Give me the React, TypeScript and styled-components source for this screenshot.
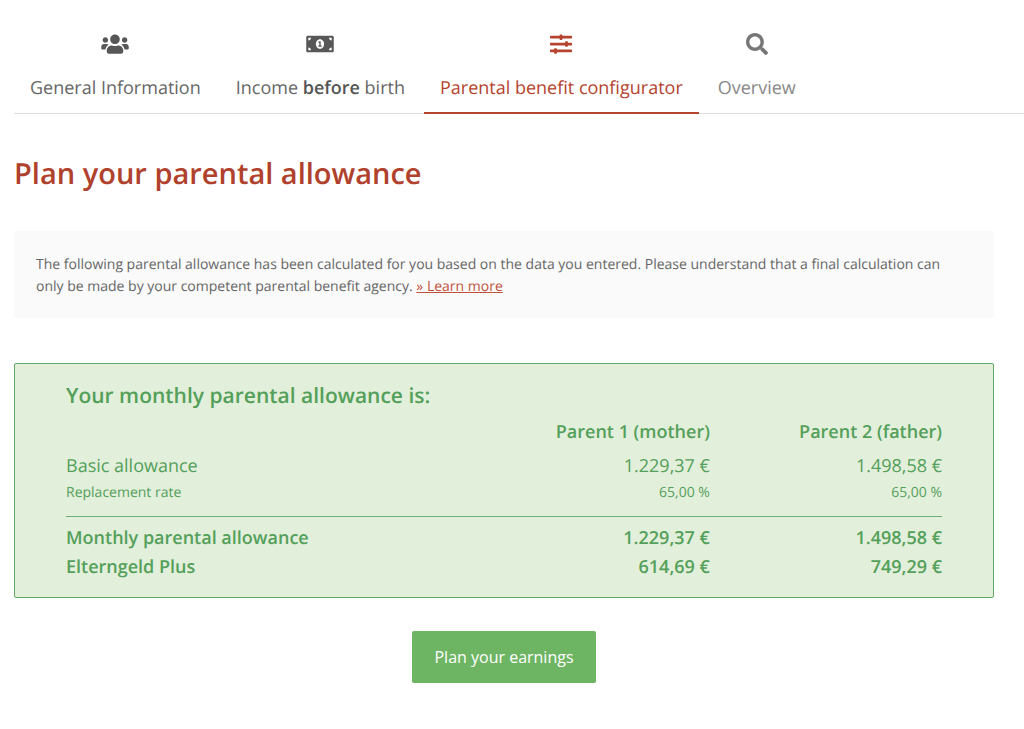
import React from "react";
import styled, { createGlobalStyle } from "styled-components";
import { FaMoneyBillAlt, FaSearch, FaSlidersH, FaUsers } from "react-icons/fa";

const GlobalStyle = createGlobalStyle`
  *, *::before, *::after { box-sizing: border-box; }
  body {
    margin: 0;
    background: #fff;
    color: #666;
    font-family: "Open Sans", "Noto Sans", sans-serif;
    text-rendering: geometricPrecision;
  }
`;

const Page = styled.div`
  padding: 24px 0 44px 14px;
`;

const Tabs = styled.nav`
  display: flex;
  gap: 3px;
  border-bottom: 1px solid #ddd;
`;

type TabState = "done" | "active" | "upcoming";

const tabColors: Record<TabState, string> = {
  done: "#666",
  active: "#b5432e",
  upcoming: "#888",
};

const iconColors: Record<TabState, string> = {
  done: "#575757",
  active: "#b5432e",
  upcoming: "#777",
};

const Tab = styled.a<{ $state: TabState }>`
  display: flex;
  flex-direction: column;
  align-items: center;
  gap: 20px;
  padding: 9px 16px 11px;
  margin-bottom: -1px;
  border-bottom: 2px solid
    ${({ $state }) => ($state === "active" ? "#b5432e" : "transparent")};
  color: ${({ $state }) => tabColors[$state]};
  font-size: 18px;
  line-height: 26px;
  text-decoration: none;
  white-space: nowrap;

  svg {
    width: 28px;
    height: 22px;
    color: ${({ $state }) => iconColors[$state]};
  }

  strong {
    font-weight: 600;
    color: #555;
  }
`;

const Content = styled.main`
  display: flex;
  flex-direction: column;
  margin-right: 30px;
`;

const Title = styled.h1`
  margin: 39px 0 36px;
  color: #b0412c;
  font-size: 29px;
  font-weight: 600;
  line-height: 42px;
`;

const Notice = styled.p`
  margin: 0 0 45px;
  padding: 23px 36px 20px 22px;
  background: #fafafa;
  font-size: 14px;
  line-height: 22px;
`;

const TextLink = styled.a`
  color: #c0523d;
`;

const Result = styled.section`
  padding: 17px 51px 15px;
  border: 1px solid #5fa866;
  border-radius: 2px;
  background: #e2efda;
  color: #54a05a;
`;

const ResultTitle = styled.h2`
  margin: 0;
  font-size: 21px;
  font-weight: 600;
  line-height: 31px;
`;

const Table = styled.table`
  width: 100%;
  border-collapse: collapse;
  table-layout: fixed;
  font-size: 18px;
  line-height: 29px;
`;

const LabelColumn = styled.col`
  width: 47%;
`;

const Cell = styled.td`
  padding: 0;
  text-align: right;
`;

const HeadCell = styled.th`
  padding: 6px 0;
  font-weight: 600;
  line-height: 28px;
  text-align: right;
`;

const RowLabel = styled.th`
  padding: 0;
  font-weight: inherit;
  text-align: left;
`;

const SmallRow = styled.tr`
  font-size: 14px;
  line-height: 24px;

  > * {
    padding-bottom: 11px;
  }
`;

const Totals = styled.tbody`
  border-top: 1px solid #6fb074;
  font-weight: 600;

  tr:first-child > * {
    padding-top: 7px;
  }
`;

const PrimaryButton = styled.button`
  align-self: center;
  margin-top: 33px;
  padding: 14px 22px;
  border: 0;
  border-radius: 2px;
  background: #6eb563;
  color: #fff;
  font-family: inherit;
  font-size: 16px;
  line-height: 24px;
  cursor: pointer;
`;

export default function App() {
  return (
    <>
      <GlobalStyle />
      <Page>
        <Tabs aria-label="Steps">
          <Tab href="#general" $state="done">
            <FaUsers aria-hidden />
            <span>General Information</span>
          </Tab>
          <Tab href="#income" $state="done">
            <FaMoneyBillAlt aria-hidden />
            <span>
              Income <strong>before</strong> birth
            </span>
          </Tab>
          <Tab href="#configurator" $state="active" aria-current="step">
            <FaSlidersH aria-hidden />
            <span>Parental benefit configurator</span>
          </Tab>
          <Tab href="#overview" $state="upcoming">
            <FaSearch aria-hidden />
            <span>Overview</span>
          </Tab>
        </Tabs>
        <Content>
          <Title>Plan your parental allowance</Title>
          <Notice>
            The following parental allowance has been calculated for you based
            on the data you entered. Please understand that a final calculation
            can only be made by your competent parental benefit agency.{" "}
            <TextLink href="#more">» Learn more</TextLink>
          </Notice>
          <Result>
            <ResultTitle>Your monthly parental allowance is:</ResultTitle>
            <Table>
              <colgroup>
                <LabelColumn />
                <col />
                <col />
              </colgroup>
              <thead>
                <tr>
                  <Cell />
                  <HeadCell scope="col">Parent 1 (mother)</HeadCell>
                  <HeadCell scope="col">Parent 2 (father)</HeadCell>
                </tr>
              </thead>
              <tbody>
                <tr>
                  <RowLabel scope="row">Basic allowance</RowLabel>
                  <Cell>1.229,37 €</Cell>
                  <Cell>1.498,58 €</Cell>
                </tr>
                <SmallRow>
                  <RowLabel scope="row">Replacement rate</RowLabel>
                  <Cell>65,00 %</Cell>
                  <Cell>65,00 %</Cell>
                </SmallRow>
              </tbody>
              <Totals>
                <tr>
                  <RowLabel scope="row">Monthly parental allowance</RowLabel>
                  <Cell>1.229,37 €</Cell>
                  <Cell>1.498,58 €</Cell>
                </tr>
                <tr>
                  <RowLabel scope="row">Elterngeld Plus</RowLabel>
                  <Cell>614,69 €</Cell>
                  <Cell>749,29 €</Cell>
                </tr>
              </Totals>
            </Table>
          </Result>
          <PrimaryButton type="button">Plan your earnings</PrimaryButton>
        </Content>
      </Page>
    </>
  );
}
